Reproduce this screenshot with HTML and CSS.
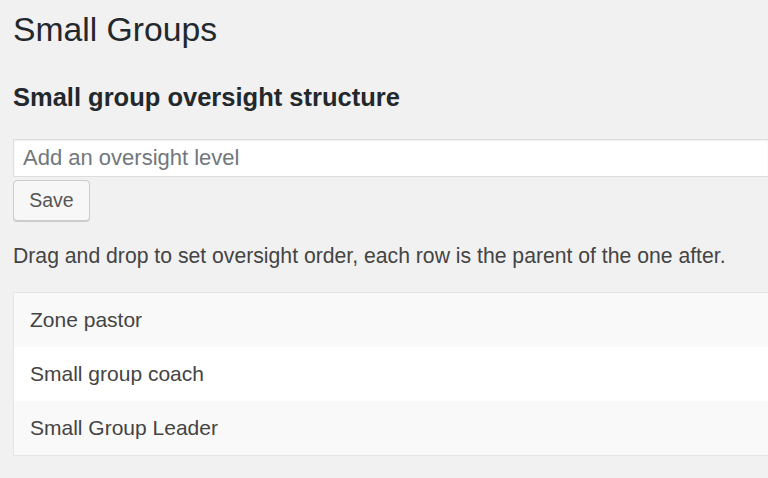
FILE: index.html
```html
<!DOCTYPE html>
<html>
<head>
<meta charset="utf-8">
<link rel="stylesheet" href="styles.css">
</head>
<body>
<div class="wrap">
  <h1 class="title">Small Groups</h1>
  <h2 class="subtitle">Small group oversight structure</h2>
  <form class="add-form">
    <input class="level-input" type="text" placeholder="Add an oversight level">
    <button class="btn" type="button">Save</button>
  </form>
  <p class="desc">Drag and drop to set oversight order, each row is the parent of the one after.</p>
  <ul class="levels">
    <li class="level">Zone pastor</li>
    <li class="level">Small group coach</li>
    <li class="level">Small Group Leader</li>
  </ul>
</div>
</body>
</html>
```
FILE: styles.css
```css
html, body {
  margin: 0;
  padding: 0;
  background: #f1f1f1;
}
body {
  font-family: "Liberation Sans", Arial, sans-serif;
  color: #444;
}
.wrap {
  padding-left: 13px;
}
.title {
  margin: 9px 0 0;
  font-size: 33.7px;
  line-height: 40px;
  font-weight: 400;
  color: #23282d;
}
.subtitle {
  margin: 33px 0 0;
  font-size: 25.5px;
  line-height: 30px;
  font-weight: 700;
  color: #23282d;
}
.add-form {
  margin: 27px 0 0;
  display: flex;
  flex-direction: column;
  align-items: flex-start;
  gap: 3px;
}
.level-input {
  box-sizing: border-box;
  width: 100%;
  height: 38px;
  margin: 0;
  padding: 0 9px;
  border: 1px solid #ddd;
  border-right: none;
  box-shadow: inset 0 1px 2px rgba(0,0,0,.07);
  background: #fff;
  font-family: "Liberation Sans", Arial, sans-serif;
  font-size: 22px;
  color: #32373c;
  outline: none;
}
.level-input::placeholder {
  color: #72777c;
}
.btn {
  box-sizing: border-box;
  width: 77px;
  height: 41px;
  margin: 0;
  padding: 0;
  border: 1px solid #ccc;
  border-radius: 4px;
  background: #f7f7f7;
  box-shadow: 0 1px 0 #ccc;
  font-family: "Liberation Sans", Arial, sans-serif;
  font-size: 19.5px;
  color: #555;
}
.desc {
  margin: 21px 0 0;
  font-size: 21.2px;
  line-height: 28px;
  color: #444;
}
.levels {
  list-style: none;
  margin: 22px 0 0;
  padding: 0;
  border: 1px solid #e5e5e5;
  border-right: none;
  box-shadow: 0 1px 1px rgba(0,0,0,.04);
  background: #fff;
}
.level {
  height: 54px;
  line-height: 54px;
  padding-left: 16px;
  font-size: 21px;
  color: #444;
}
.level:nth-child(odd) {
  background: #f9f9f9;
}
```
